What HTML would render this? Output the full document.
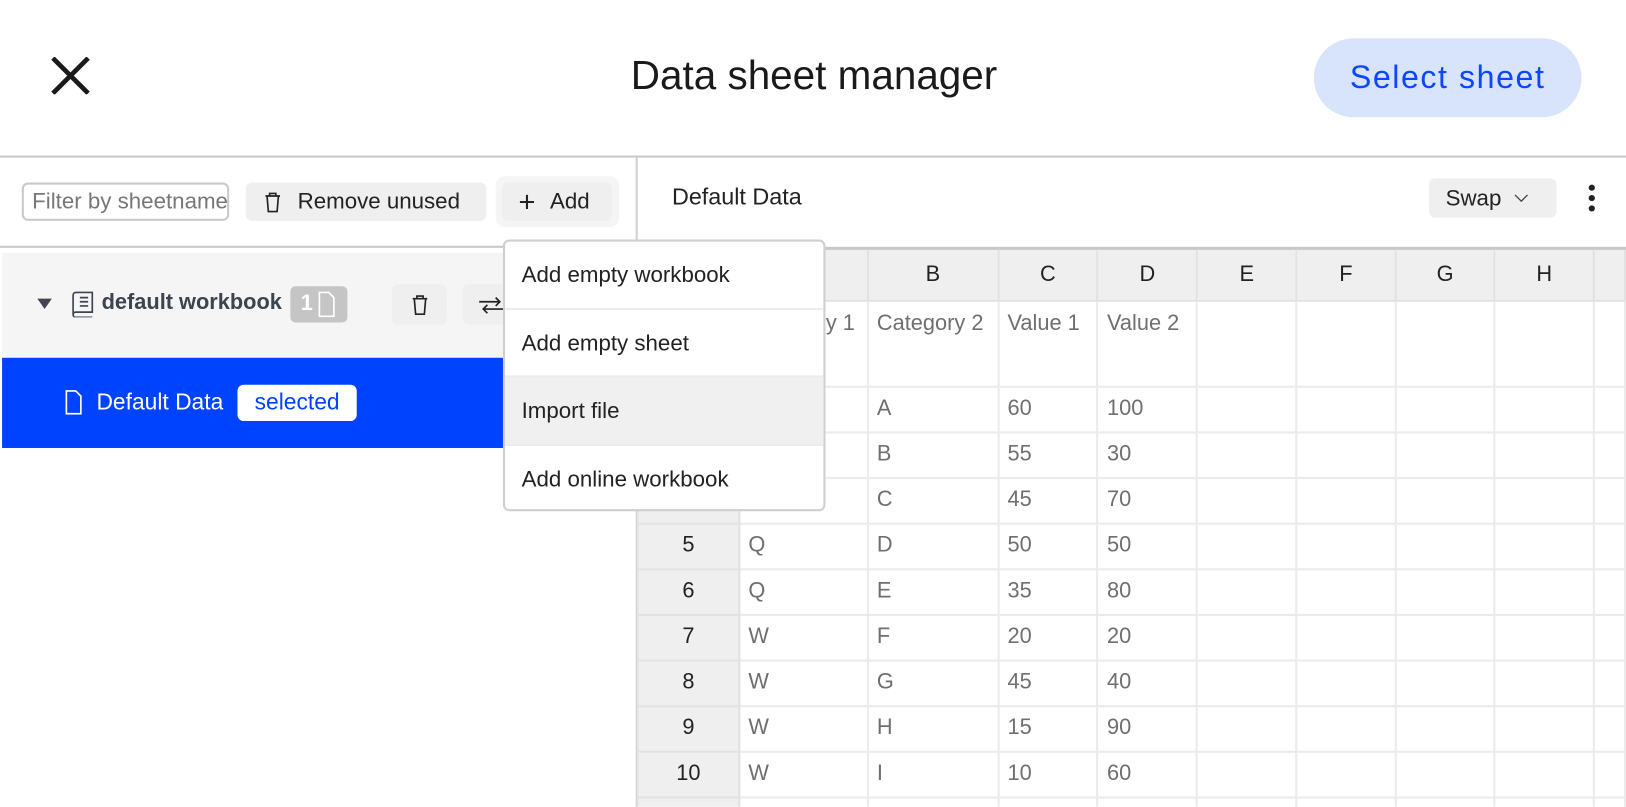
<!DOCTYPE html>
<html><head><meta charset="utf-8"><style>
*{box-sizing:border-box;margin:0;padding:0}
body{width:1626px;height:806px;overflow:hidden;background:#fff;font-family:"Liberation Sans",Arial,sans-serif;color:#222}
#w{position:relative;width:1568px;height:778px;transform:scale(1.037);transform-origin:0 0;overflow:hidden}
.abs{position:absolute}
.btn{position:absolute;background:#efefef;border-radius:6px;display:flex;align-items:center;font-size:21.5px;color:#222}
table{border-collapse:collapse;position:absolute;left:614px;top:238px;table-layout:fixed}
td{border:2px solid #ebebeb;font-size:21px;color:#6f6f6f;padding:0 0 0 8px;vertical-align:top;line-height:40px;white-space:nowrap;overflow:hidden}
tr.h td{background:#efefef;color:#222;text-align:center;padding:0;line-height:48px;height:50px;font-size:21px;border-color:#e2e2e2;border-top:3px solid #c8c8c8}
td.rn{background:#efefef;color:#222;text-align:center;padding:0;border-color:#e2e2e2}
tr.r td{height:44px}
.menu{position:absolute;left:485px;top:231px;width:311px;height:262px;background:#fff;border:2px solid #cfcfcf;border-radius:6px;overflow:hidden}
.menu div{height:65.5px;line-height:64px;padding-left:16px;font-size:21.5px;color:#222;border-bottom:2px solid #ececec}
</style></head><body><div id="w">
<svg class="abs" style="left:48px;top:55px" width="40" height="36" viewBox="0 0 40 36"><path d="M3 1L37 35M37 1L3 35" stroke="#1a1a1a" stroke-width="4.5"/></svg>
<div class="abs" style="left:0;width:1570px;top:52px;text-align:center;font-size:39px;color:#1a1a1a">Data sheet manager</div>
<div class="abs" style="left:1267px;top:37px;width:258px;height:76px;border-radius:38px;background:#d8e3fc;color:#0a47ff;font-size:31px;letter-spacing:1.5px;text-align:center;line-height:76px">Select sheet</div>
<div class="abs" style="left:0;top:150px;width:1568px;height:2px;background:#c8c8c8"></div>
<div class="abs" style="left:613px;top:152px;width:2px;height:654px;background:#d0d0d0"></div>
<div class="abs" style="left:0;top:237px;width:614px;height:2px;background:#c8c8c8"></div>
<div class="abs" style="left:21px;top:176px;width:200px;height:37px;border:2px solid #c9c9c9;border-radius:6px;font-size:21.5px;color:#777;line-height:33px;padding-left:8px;overflow:hidden;white-space:nowrap">Filter by sheetname</div>
<div class="btn" style="left:237px;top:176px;width:232px;height:37px;padding-left:16px"><svg width="20" height="22" viewBox="0 0 20 22"><path d="M3 5h14M7 5V2.5h6V5M4.5 5l1.3 15h8.4l1.3-15" fill="none" stroke="#222" stroke-width="1.6"/></svg><span style="margin-left:14px">Remove unused</span></div>
<div class="abs" style="left:478px;top:170px;width:119px;height:49px;border-radius:9px;background:#f5f5f5"></div>
<div class="btn" style="left:484px;top:176px;width:106px;height:37px;padding-left:16px"><span style="font-size:28px;font-weight:300;line-height:20px">+</span><span style="margin-left:14px">Add</span></div>
<div class="abs" style="left:2px;top:244px;width:612px;height:101px;background:#f5f5f5"></div>
<div class="abs" style="left:36px;top:288px;width:0;height:0;border-left:7px solid transparent;border-right:7px solid transparent;border-top:10px solid #445"></div>
<svg class="abs" style="left:69px;top:281px" width="22" height="25" viewBox="0 0 22 25"><path d="M4 1h16v19H4a2.5 2.5 0 0 0 0 5h16M4 1a2.5 2.5 0 0 0-2.5 2.5v19M8 6h8M8 10h8M8 14h8" fill="none" stroke="#3d4450" stroke-width="1.6"/></svg>
<div class="abs" style="left:98px;top:280px;font-size:21px;font-weight:bold;color:#3d4450">default workbook</div>
<div class="abs" style="left:280px;top:276px;width:55px;height:35px;background:#c5c5c5;border-radius:5px;color:#fff;font-weight:bold;font-size:21px;padding:5px 0 0 10px">1<svg style="position:absolute;left:27px;top:5px" width="16" height="25" viewBox="0 0 16 25"><path d="M1 1h9l5 5v18H1z" fill="none" stroke="#fff" stroke-width="1.6"/></svg></div>
<div class="btn" style="left:378px;top:274px;width:53px;height:39px;justify-content:center"><svg width="20" height="22" viewBox="0 0 20 22"><path d="M3 5h14M7 5V2.5h6V5M4.5 5l1.3 15h8.4l1.3-15" fill="none" stroke="#222" stroke-width="1.6"/></svg></div>
<div class="btn" style="left:446px;top:274px;width:50px;height:39px"><svg style="margin-left:16px" width="24" height="20" viewBox="0 0 24 20"><path d="M0 7h20M16 3l4 4-4 4M24 14H4M8 10l-4 4 4 4" fill="none" stroke="#222" stroke-width="1.6"/></svg></div>
<div class="abs" style="left:2px;top:345px;width:612px;height:87px;background:#0043ff"></div>
<svg class="abs" style="left:63px;top:376px" width="16" height="24" viewBox="0 0 16 24"><path d="M1 1h9l5 5v17H1z" fill="none" stroke="#fff" stroke-width="1.6"/></svg>
<div class="abs" style="left:93px;top:375px;font-size:22px;color:#fff">Default Data</div>
<div class="abs" style="left:229px;top:371px;width:115px;height:35px;background:#fff;border-radius:6px;color:#0043ff;font-size:22px;text-align:center;line-height:33px">selected</div>
<div class="abs" style="left:648px;top:177px;font-size:22.5px;color:#222">Default Data</div>
<div class="btn" style="left:1378px;top:172px;width:123px;height:38px;padding-left:16px">Swap<svg style="margin-left:12px" width="14" height="8" viewBox="0 0 14 8"><path d="M1 1l6 6 6-6" fill="none" stroke="#444" stroke-width="1.3"/></svg></div>
<div class="abs" style="left:1532px;top:178px;width:6px;height:6px;border-radius:3px;background:#222;box-shadow:0 10px 0 #222,0 20px 0 #222"></div>
<table>
<colgroup><col style="width:98px"><col style="width:124px"><col style="width:126px"><col style="width:96px"><col style="width:96px"><col style="width:96px"><col style="width:96px"><col style="width:96px"><col style="width:96px"><col style="width:30px"></colgroup>
<tr class="h"><td></td><td>A</td><td>B</td><td>C</td><td>D</td><td>E</td><td>F</td><td>G</td><td>H</td><td></td></tr>
<tr><td class="rn" style="height:83px;line-height:42px">1</td><td style="line-height:42px">Category 1</td><td style="line-height:42px">Category 2</td><td style="line-height:42px">Value 1</td><td style="line-height:42px">Value 2</td><td></td><td></td><td></td><td></td><td></td></tr>
<tr class="r"><td class="rn">2</td><td>Q</td><td>A</td><td>60</td><td>100</td><td></td><td></td><td></td><td></td><td></td></tr>
<tr class="r"><td class="rn">3</td><td>Q</td><td>B</td><td>55</td><td>30</td><td></td><td></td><td></td><td></td><td></td></tr>
<tr class="r"><td class="rn">4</td><td>Q</td><td>C</td><td>45</td><td>70</td><td></td><td></td><td></td><td></td><td></td></tr>
<tr class="r"><td class="rn">5</td><td>Q</td><td>D</td><td>50</td><td>50</td><td></td><td></td><td></td><td></td><td></td></tr>
<tr class="r"><td class="rn">6</td><td>Q</td><td>E</td><td>35</td><td>80</td><td></td><td></td><td></td><td></td><td></td></tr>
<tr class="r"><td class="rn">7</td><td>W</td><td>F</td><td>20</td><td>20</td><td></td><td></td><td></td><td></td><td></td></tr>
<tr class="r"><td class="rn">8</td><td>W</td><td>G</td><td>45</td><td>40</td><td></td><td></td><td></td><td></td><td></td></tr>
<tr class="r"><td class="rn">9</td><td>W</td><td>H</td><td>15</td><td>90</td><td></td><td></td><td></td><td></td><td></td></tr>
<tr class="r"><td class="rn">10</td><td>W</td><td>I</td><td>10</td><td>60</td><td></td><td></td><td></td><td></td><td></td></tr>
<tr class="r"><td class="rn">11</td><td>W</td><td>J</td><td>30</td><td>50</td><td></td><td></td><td></td><td></td><td></td></tr>
</table>
<div class="menu">
<div>Add empty workbook</div>
<div>Add empty sheet</div>
<div style="background:#f0f0f0">Import file</div>
<div style="border:none">Add online workbook</div>
</div>
</div></body></html>
